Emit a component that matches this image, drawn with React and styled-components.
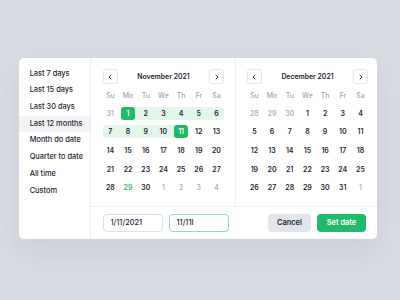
import React from 'react'
import styled, { createGlobalStyle } from 'styled-components'
import { ChevronLeft, ChevronRight } from 'lucide-react'

const GlobalStyle = createGlobalStyle`
  html, body {
    margin: 0;
    padding: 0;
    background: #d9dce2;
    font-family: Inter, "Noto Sans", sans-serif;
  }
`

const Page = styled.div`
  width: 400px;
  height: 300px;
  box-sizing: border-box;
  padding: 58px 0 0 19px;
`

const Card = styled.div`
  width: 358px;
  display: flex;
  background: #fff;
  border-radius: 5px;
  box-shadow: 0 12px 28px rgba(30, 40, 60, 0.07);
  overflow: hidden;
`

const Sidebar = styled.ul`
  list-style: none;
  margin: 0;
  padding: 7.7px 0 0;
  width: 71px;
  flex: 0 0 71px;
  border-right: 1px solid #eceef1;
`

const Preset = styled.li`
  height: 16.7px;
  line-height: 16.7px;
  padding-left: 10.7px;
  font-size: 7.4px;
  font-weight: 500;
  color: #1d2430;
  background: ${p => (p.$active ? '#f2f3f5' : 'transparent')};
  white-space: nowrap;
`

const Main = styled.div`
  flex: 1;
  display: flex;
  flex-direction: column;
`

const Months = styled.div`
  display: flex;
`

const MonthPanel = styled.div`
  padding: 11.3px ${p => p.$right}px 11.3px ${p => p.$left}px;
  border-right: ${p => (p.$divider ? '1px solid #eceef1' : 'none')};
`

const NavRow = styled.div`
  width: 121px;
  height: 14.7px;
  display: flex;
  align-items: center;
  justify-content: space-between;
  margin-bottom: 6px;
`

const NavButton = styled.button`
  width: 14.7px;
  height: 14.7px;
  padding: 0;
  display: flex;
  align-items: center;
  justify-content: center;
  background: #fff;
  border: 1px solid #e4e6ea;
  border-radius: 3px;
  color: #1d2430;
`

const MonthTitle = styled.div`
  font-size: 6.9px;
  font-weight: 600;
  color: #1d2430;
`

const DayGrid = styled.div`
  width: 121px;
  display: grid;
  grid-template-columns: repeat(7, 14.7px);
  column-gap: 3px;
  grid-template-rows: 11px repeat(5, 14.7px);
  row-gap: 4px;
`

const Weekday = styled.div`
  grid-row: 1;
  display: flex;
  align-items: center;
  justify-content: center;
  font-size: 6.9px;
  font-weight: 500;
  color: #a0a6b1;
`

const Band = styled.div`
  grid-row: ${p => p.$row};
  grid-column: ${p => p.$from} / ${p => p.$to};
  background: #e3f6ea;
  border-radius: 3px;
  margin-top: 1.7px;
`

const Day = styled.div`
  grid-row: ${p => p.$row};
  grid-column: ${p => p.$col};
  margin-top: 1.7px;
  display: flex;
  align-items: center;
  justify-content: center;
  font-size: 7px;
  border-radius: 3px;
  color: ${p =>
    p.$selected ? '#fff' : p.$muted ? '#a3a9b4' : p.$today ? '#22c06d' : '#1d2430'};
  background: ${p => (p.$selected ? '#20b968' : 'transparent')};
  font-weight: ${p => (p.$muted ? 500 : 600)};
`

const Footer = styled.div`
  height: 32.4px;
  border-top: 1px solid #eceef1;
  display: flex;
  align-items: center;
  padding: 0 11px 0 12px;
  gap: 6px;
`

const DateInput = styled.div`
  box-sizing: border-box;
  width: 60px;
  height: 18px;
  border: 1px solid ${p => (p.$focused ? '#8edcb1' : '#dcdfe3')};
  border-radius: 4px;
  padding-left: 6.5px;
  display: flex;
  align-items: center;
  font-size: 7.4px;
  font-weight: 500;
  color: #1d2430;
`

const Spacer = styled.div`
  flex: 1;
`

const ActionButton = styled.button`
  height: 18px;
  width: ${p => p.$width}px;
  padding: 0;
  border: none;
  border-radius: 4px;
  font-family: inherit;
  font-size: 7.4px;
  font-weight: 600;
  color: ${p => (p.$primary ? '#fff' : '#1d2430')};
  background: ${p => (p.$primary ? '#1fbb6a' : '#e2e5e9')};
`

const presets = [
  'Last 7 days',
  'Last 15 days',
  'Last 30 days',
  'Last 12 months',
  'Month do date',
  'Quarter to date',
  'All time',
  'Custom'
]

const weekdays = ['Su', 'Mo', 'Tu', 'We', 'Th', 'Fr', 'Sa']

// weeks as [day, muted]
const november = [
  [[31, true], [1], [2], [3], [4], [5], [6]],
  [[7], [8], [9], [10], [11], [12], [13]],
  [[14], [15], [16], [17], [18], [19], [20]],
  [[21], [22], [23], [24], [25], [26], [27]],
  [[28], [29], [30], [1, true], [2, true], [3, true], [4, true]]
]

const december = [
  [[28, true], [29, true], [30, true], [1], [2], [3], [4]],
  [[5], [6], [7], [8], [9], [10], [11]],
  [[12], [13], [14], [15], [16], [17], [18]],
  [[19], [20], [21], [22], [23], [24], [25]],
  [[26], [27], [28], [29], [30], [31], [1, true]]
]

function Month({ title, weeks, bands = [], selected = [], today, ...panel }) {
  return (
    <MonthPanel {...panel}>
      <NavRow>
        <NavButton>
          <ChevronLeft size={8} strokeWidth={2.6} />
        </NavButton>
        <MonthTitle>{title}</MonthTitle>
        <NavButton>
          <ChevronRight size={8} strokeWidth={2.6} />
        </NavButton>
      </NavRow>
      <DayGrid>
        {weekdays.map(w => (
          <Weekday key={w}>{w}</Weekday>
        ))}
        {bands.map(b => (
          <Band key={b.row} $row={b.row + 2} $from={b.from} $to={b.to + 1} />
        ))}
        {weeks.map((week, r) =>
          week.map(([d, muted], c) => (
            <Day
              key={`${r}-${c}`}
              $row={r + 2}
              $col={c + 1}
              $muted={muted}
              $selected={!muted && selected.includes(d)}
              $today={!muted && d === today}
            >
              {d}
            </Day>
          ))
        )}
      </DayGrid>
    </MonthPanel>
  )
}

export default function App() {
  return (
    <Page>
      <GlobalStyle />
      <Card>
        <Sidebar>
          {presets.map(p => (
            <Preset key={p} $active={p === 'Last 12 months'}>
              {p}
            </Preset>
          ))}
        </Sidebar>
        <Main>
          <Months>
            <Month
              title='November 2021'
              weeks={november}
              bands={[
                { row: 0, from: 2, to: 7 },
                { row: 1, from: 1, to: 5 }
              ]}
              selected={[1, 11]}
              today={29}
              $left={12}
              $right={11}
              $divider
            />
            <Month title='December 2021' weeks={december} $left={11} $right={9} />
          </Months>
          <Footer>
            <DateInput>1/11/2021</DateInput>
            <DateInput $focused>11/11l</DateInput>
            <Spacer />
            <ActionButton $width={43}>Cancel</ActionButton>
            <ActionButton $width={49} $primary>
              Set date
            </ActionButton>
          </Footer>
        </Main>
      </Card>
    </Page>
  )
}
